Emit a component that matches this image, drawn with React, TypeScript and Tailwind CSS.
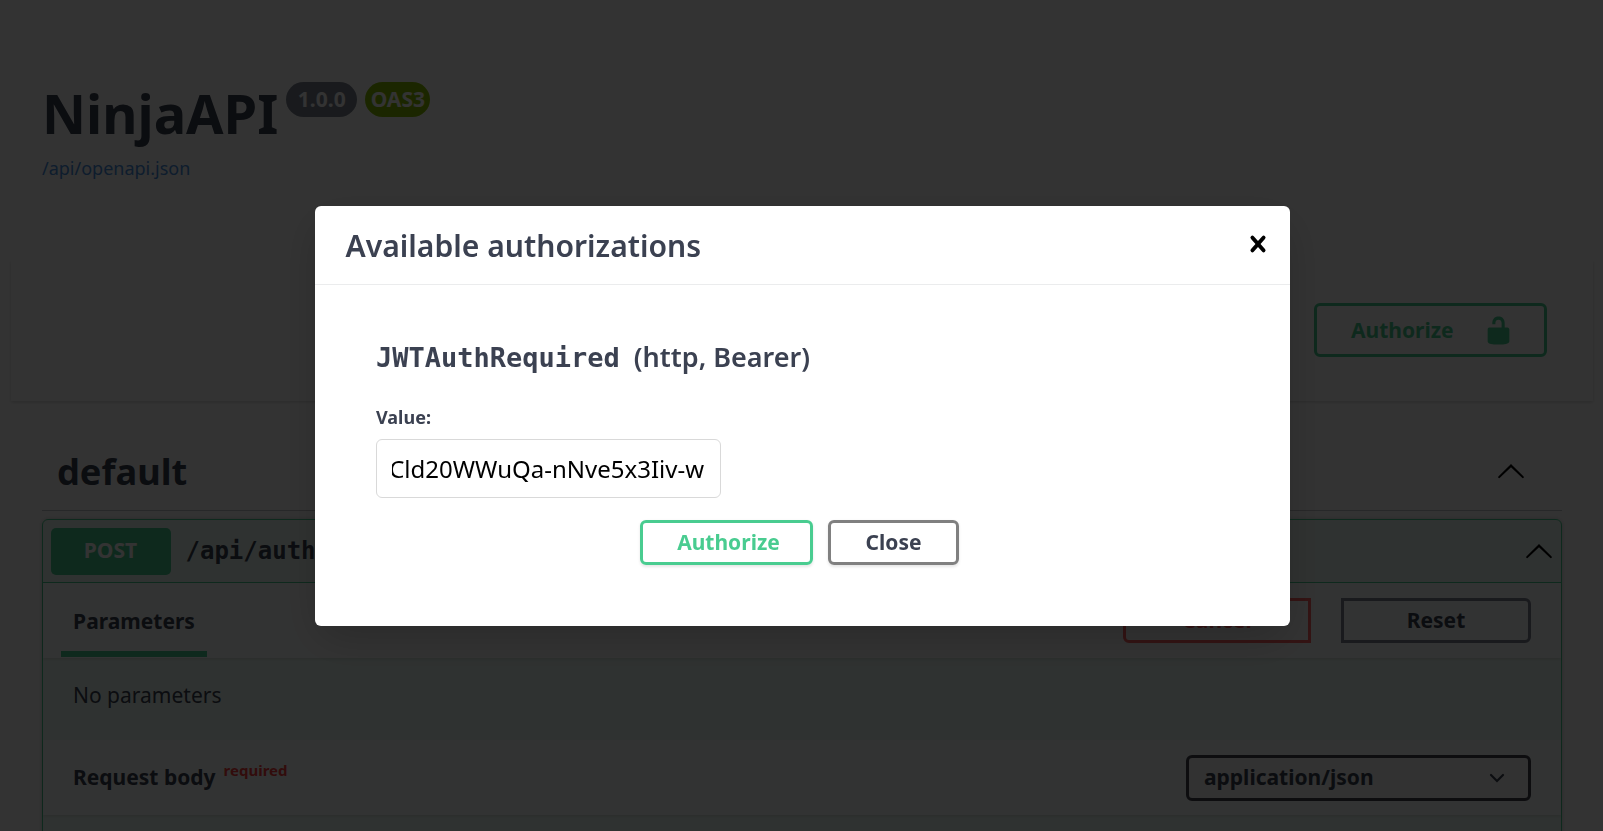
import { Fragment } from 'react';

const sans = "font-['Noto_Sans','Open_Sans',sans-serif]";
const mono = "font-['DejaVu_Sans_Mono','Liberation_Mono',monospace]";

const Arrow = ({ className }: { className: string }) => (
  <svg viewBox="0 0 20 20" className={className} fill="currentColor">
    <path d="M17.418 13.891c.272.268.709.268.979 0s.271-.701 0-.969l-7.908-7.83c-.27-.268-.707-.268-.979 0l-7.908 7.83c-.27.268-.27.701 0 .969.271.268.709.268.979 0L10 6.75l7.418 7.141z" />
  </svg>
);

const Page = () => (
  <div className="pl-[11px] pr-[10px]">
    <div className="px-[31px] pt-[76px]">
      <div className="flex items-start h-[77px]">
        <h2 className="text-[54.2px] leading-[74px] font-bold text-[#3b4151]">NinjaAPI</h2>
        <span className="ml-[8px] mt-[6px] h-[35px] px-[11.5px] rounded-full bg-[#7d8492] text-white text-[21px] leading-[35px] font-bold">1.0.0</span>
        <span className="ml-[8px] mt-[6px] h-[35px] px-[5.5px] rounded-full bg-[#89bf04] text-white text-[21px] leading-[35px] font-bold">OAS3</span>
      </div>
      <a className="block h-[30px] text-[18px] leading-[30px] text-[#4990e2]">/api/openapi.json</a>
    </div>

    <div className="mt-[76px] h-[142px] bg-white shadow-[0_1.5px_3px_rgba(0,0,0,0.15)] px-[31px] flex items-center justify-end">
      <button className="mr-[15px] w-[233px] h-[54px] border-[3px] border-[#49cc90] rounded-[6px] flex items-center pl-[34px] text-[21px] font-bold text-[#49cc90]">
        <span className="pt-[1px]">Authorize</span>
        <svg viewBox="0 0 20 20" className="w-[31px] h-[31px] ml-[29px]" fill="currentColor">
          <path d="M15.8 8H14V5.6C14 2.703 12.665 1 10 1 7.334 1 6 2.703 6 5.6V6h2v-.801C8 3.754 8.797 3 10 3c1.203 0 2 .754 2 2.199V8H4c-.553 0-1 .646-1 1.199V17c0 .549.428 1.139.951 1.307l1.197.387C5.672 18.861 6.55 19 7.1 19h5.8c.549 0 1.428-.139 1.951-.307l1.196-.387c.524-.167.953-.757.953-1.306V9.199C17 8.646 16.352 8 15.8 8z" />
        </svg>
      </button>
    </div>

    <div className="px-[31px]">
      <div className="mt-[31px] h-[79px] border-b-[1.5px] border-[#3b4151]/30 flex items-center justify-between pl-[15px] pr-[36px] text-black">
        <h3 className="text-[36.2px] pt-[1px] font-bold text-[#3b4151]">default</h3>
        <Arrow className="w-[30px] h-[30px] mt-[2px]" />
      </div>

      <div className="mt-[8px] border-[1.5px] border-[#49cc90] rounded-[6px] bg-[#49cc90]/10 shadow-[0_0_4px_rgba(0,0,0,0.19)]">
        <div className="h-[63px] border-b-[1.5px] border-[#49cc90] flex items-center pl-[7.5px] pr-[7px]">
          <span className="w-[120px] h-[47px] rounded-[5px] bg-[#49cc90] text-white text-[21px] font-bold flex items-center justify-center">POST</span>
          <span className={`${mono} ml-[15px] text-[24px] font-bold text-[#3b4151]`}>/api/auth/login</span>
          <Arrow className="ml-auto w-[30px] h-[30px] mt-[2px] text-black" />
        </div>

        <div className="h-[75px] bg-white/80 shadow-[0_1.5px_3px_rgba(0,0,0,0.1)] flex items-center pr-[30px]">
          <div className="ml-[18px] w-[146px] h-full relative flex items-center justify-center pt-[2px] text-[21px] font-bold text-[#3b4151]">
            Parameters
            <span className="absolute left-0 right-0 bottom-[1px] h-[6px] bg-[#49cc90]" />
          </div>
          <div className="ml-auto flex items-center gap-[30px]">
            <button className="w-[188px] h-[45px] border-[3px] border-[#ff6060] rounded-l-[6px] text-[21px] font-bold text-[#ff6060]">Cancel</button>
            <button className="w-[190px] h-[45px] border-[3px] border-[#7d8293] rounded-r-[6px] text-[21px] font-bold text-[#3b4151]">Reset</button>
          </div>
        </div>

        <div className="h-[82px] flex items-center pl-[30px] pb-[6px] text-[21px] text-[#3b4151]">No parameters</div>

        <div className="h-[75px] bg-white/80 shadow-[0_1.5px_3px_rgba(0,0,0,0.1)] flex items-center pl-[30px] pr-[30px]">
          <span className="text-[21px] font-bold text-[#3b4151]">Request body</span>
          <span className="ml-[8px] -mt-[14px] text-[15px] font-bold text-[#f93e3e]">required</span>
          <div className="ml-auto w-[345px] h-[46px] border-[3px] border-[#41444e] rounded-[6px] bg-[#f7f7f7] flex items-center pl-[15px] pr-[21px] text-[21px] font-bold text-[#3b4151]">
            application/json
            <svg viewBox="0 0 20 20" className="ml-auto w-[20px] h-[20px]" fill="none" stroke="currentColor" strokeWidth="2.2" strokeLinecap="round">
              <path d="M4 7l6 6 6-6" />
            </svg>
          </div>
        </div>
        <div className="h-[200px]" />
      </div>
    </div>
  </div>
);

const AuthModal = () => (
  <div className="fixed inset-0 bg-[rgba(0,0,0,0.8)] flex items-center justify-center pl-[2px] pt-[1px]">
    <div className="w-[975px] h-[420px] bg-white rounded-[6px] shadow-[0_15px_45px_-3px_rgba(0,0,0,0.2)]">
      <div className="h-[79px] border-b-[1.5px] border-[#3b4151]/10 flex items-center justify-between pl-[30.5px] pr-[16px]">
        <h3 className="text-[30.1px] pt-[1px] font-semibold text-[#3b4151]">Available authorizations</h3>
        <button className="w-[32px] h-[32px] -mt-[2px] text-black">
          <svg viewBox="0 0 20 20" className="w-[32px] h-[32px]" fill="currentColor">
            <path d="M14.348 14.849a1.2 1.2 0 0 1-1.697 0L10 11.819l-2.651 3.029a1.2 1.2 0 1 1-1.697-1.697l2.758-3.15-2.759-3.152a1.2 1.2 0 1 1 1.697-1.697L10 8.183l2.651-3.031a1.2 1.2 0 1 1 1.697 1.697l-2.758 3.152 2.758 3.15a1.2 1.2 0 0 1 0 1.698z" />
          </svg>
        </button>
      </div>
      <div className="px-[61px] pt-[53px]">
        <h4 className="h-[38px] text-[27px] leading-[38px] font-semibold text-[#3b4151] whitespace-nowrap">
          <code className={`${mono} font-bold mr-[7px]`}>JWTAuthRequired</code> (http, Bearer)
        </h4>
        <label className="block mt-[28px] h-[26px] text-[18px] leading-[26px] font-bold text-[#3b4151]">Value:</label>
        <div className="mt-[9px] w-[345px] h-[59px] border-[1.5px] border-[#d9d9d9] rounded-[6px] pl-[15px] pr-[16px] flex items-center">
          <div className="w-full overflow-hidden flex justify-end text-[24px] text-black whitespace-nowrap">
            <span className="shrink-0">Cld20WWuQa-nNve5x3Iiv-w</span>
          </div>
        </div>
      </div>
      <div className="mt-[22px] pr-[6px] flex justify-center gap-[15px]">
        <button className="w-[173px] h-[45px] border-[3px] border-[#49cc90] rounded-[6px] pl-[4px] pt-[1px] text-[21px] font-bold text-[#49cc90] shadow-[0_1.5px_3px_rgba(0,0,0,0.1)]">Authorize</button>
        <button className="w-[131px] h-[45px] border-[3px] border-[#808080] rounded-[6px] pt-[1px] text-[21px] font-bold text-[#3b4151] shadow-[0_1.5px_3px_rgba(0,0,0,0.1)]">Close</button>
      </div>
    </div>
  </div>
);

export default function App() {
  return (
    <Fragment>
      <div className={`${sans} h-[831px] overflow-hidden bg-white`}>
        <Page />
        <AuthModal />
      </div>
    </Fragment>
  );
}
